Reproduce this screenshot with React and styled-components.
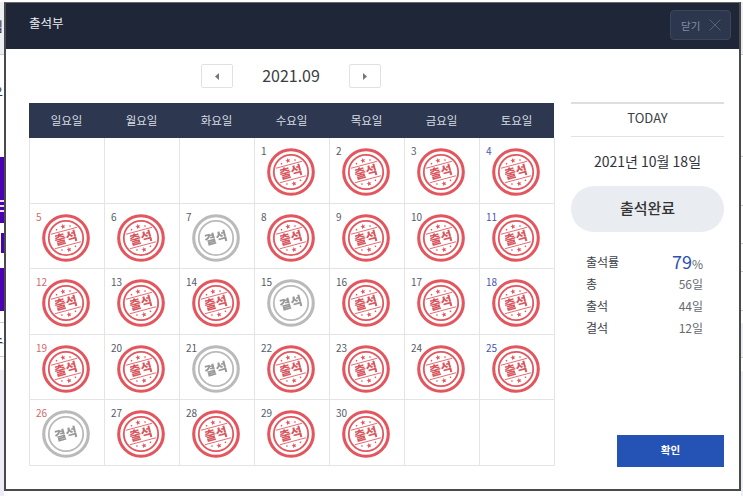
import React from "react";
import styled, { createGlobalStyle } from "styled-components";

const FONT = `"Noto Sans CJK KR", "Noto Sans", sans-serif`;

const WEEK = ["일요일", "월요일", "화요일", "수요일", "목요일", "금요일", "토요일"];
const ABSENT = [7, 15, 21, 26];
const LEAD = 3;
const TOTAL_CELLS = 35;

const STATS = [
  { label: "출석", value: "44일" },
  { label: "결석", value: "12일" },
];

const STAR = "M0-2.6l.7 1.7 1.8.1-1.4 1.2.5 1.8L0 1.2-1.6 2.2-1.1.4-2.5-.8-.7-.9z";

const Stamp = ({ absent }) => {
  const color = absent ? "#bababa" : "#e4565e";
  const ink = absent ? "#989898" : "#d8585f";
  return (
    <StampSvg viewBox="0 0 48 48">
      <circle cx="24" cy="24" r="22.3" fill="none" stroke={color} strokeWidth="3.1" />
      <circle cx="24" cy="24" r="17.2" fill="none" stroke={color} strokeWidth="1.8" />
      <g transform="rotate(-15 24 24)">
        {!absent && (
          <>
            <path d={STAR} fill={color} transform="translate(24 12.2)" />
            <path d={STAR} fill={color} transform="translate(24 36)" />
            <circle cx="17" cy="13.5" r=".8" fill={color} />
            <circle cx="31" cy="13.5" r=".8" fill={color} />
            <circle cx="17" cy="34.5" r=".8" fill={color} />
            <circle cx="31" cy="34.5" r=".8" fill={color} />
            <path d="M10.5 16.5h27M10.5 31.5h27" stroke={color} strokeWidth="0.8" />
          </>
        )}
        <StampText x="24" y="28.4" fill={ink} textAnchor="middle">
          {absent ? "결석" : "출석"}
        </StampText>
      </g>
    </StampSvg>
  );
};

const dayColor = (index) => {
  if (index % 7 === 0) return "#d5686c";
  if (index % 7 === 6) return "#4a55b5";
  return "#555b66";
};

const App = () => {
  const cells = Array.from({ length: TOTAL_CELLS }, (_, i) => {
    const day = i - LEAD + 1;
    return day >= 1 && day <= 30 ? day : null;
  });

  return (
    <>
      <GlobalStyle />
      <Page>
        <LeftStrip>
          <Band $h={2} $bg="#fff" />
          <Band $h={53} $bg="#eceef2" $line>
            <Fragment>입</Fragment>
          </Band>
          <Band $h={102} $bg="#fff">
            <Fragment $top={28}>으</Fragment>
          </Band>
          <Band $h={40} $bg="#4b00b4" />
          <Band $h={16} $bg="#4b00b4"><Stripes /></Band>
          <Band $h={10} $bg="#4b00b4" />
          <Band $h={10} $bg="#fff" />
          <Band $h={20} $bg="#fff"><Notch /></Band>
          <Band $h={15} $bg="#fff" />
          <Band $h={43} $bg="#4b00b4" />
          <Band $h={12} $bg="#fff" $line />
          <Band $h={21} $bg="#fff" $line>
            <Fragment $top={7}>스</Fragment>
          </Band>
          <Band $h={13} $bg="#fff" $line />
          <Band $h={13} $bg="#fff" />
          <Band $h={126} $bg="#eceef3" />
        </LeftStrip>

        <Modal>
          <Header>
            <Title>출석부</Title>
            <CloseButton>
              닫기
              <svg width="12" height="12" viewBox="0 0 12 12">
                <path d="M.5.5l11 11M11.5.5l-11 11" stroke="#56627a" strokeWidth="1" fill="none" />
              </svg>
            </CloseButton>
          </Header>

          <Body>
            <Main>
              <Pager>
                <PageButton>
                  <svg width="4" height="7" viewBox="0 0 4 7">
                    <path d="M4 0v7L0 3.5z" fill="#777" />
                  </svg>
                </PageButton>
                <Month>2021.09</Month>
                <PageButton>
                  <svg width="4" height="7" viewBox="0 0 4 7">
                    <path d="M0 0v7L4 3.5z" fill="#777" />
                  </svg>
                </PageButton>
              </Pager>

              <WeekRow>
                {WEEK.map((name) => (
                  <WeekName key={name}>{name}</WeekName>
                ))}
              </WeekRow>
              <DayGrid>
                {cells.map((day, i) => (
                  <DayCell key={i}>
                    {day && <DayNum $color={dayColor(i)}>{day}</DayNum>}
                    {day && <Stamp absent={ABSENT.includes(day)} />}
                  </DayCell>
                ))}
              </DayGrid>
            </Main>

            <Side>
              <TodayLabel>TODAY</TodayLabel>
              <TodayDate>2021년 10월 18일</TodayDate>
              <StatusPill>출석완료</StatusPill>
              <Stats>
                <StatRow>
                  <span>출석률</span>
                  <Rate>
                    <b>79</b>%
                  </Rate>
                </StatRow>
                <StatRow>
                  <span>총</span>
                  <StatValue>56일</StatValue>
                </StatRow>
                {STATS.map((s) => (
                  <StatRow key={s.label}>
                    <span>{s.label}</span>
                    <StatValue>{s.value}</StatValue>
                  </StatRow>
                ))}
              </Stats>
              <ConfirmButton>확인</ConfirmButton>
            </Side>
          </Body>
        </Modal>

        <RightStrip>
          <Band $h={2} $bg="#fff" />
          <Band $h={53} $bg="#eceef2" $line />
          <Band $h={102} $bg="#fff" $line />
          <Band $h={49} $bg="#fff" $line />
          <Band $h={38} $bg="#fff" $line />
          <Band $h={28} $bg="#fff" $line />
          <Band $h={39} $bg="#fff" $line />
          <Band $h={12} $bg="#fff" />
          <Band $h={35} $bg="#eceef3" $line />
          <Band $h={13} $bg="#fff" />
          <Band $h={125} $bg="#eceef3" />
        </RightStrip>
      </Page>
    </>
  );
};

const GlobalStyle = createGlobalStyle`
  html, body {
    margin: 0;
    padding: 0;
    background: #fff;
    overflow: hidden;
  }
  * {
    box-sizing: border-box;
  }
`;

const Page = styled.div`
  width: 743px;
  height: 496px;
  display: flex;
  font-family: ${FONT};
  overflow: hidden;
`;

const LeftStrip = styled.div`
  width: 4px;
  flex: none;
  display: flex;
  flex-direction: column;
  overflow: hidden;
`;

const RightStrip = styled(LeftStrip)`
  width: 2px;
`;

const Band = styled.div`
  flex: none;
  height: ${(p) => p.$h}px;
  background: ${(p) => p.$bg};
  border-bottom: ${(p) => (p.$line ? "1px solid #c9ccd2" : "none")};
  overflow: hidden;
`;

const Fragment = styled.div`
  margin: ${(p) => p.$top || 16}px 0 0 -9px;
  font-size: 13px;
  line-height: 16px;
  color: #333;
`;

const Stripes = styled.div`
  height: 100%;
  background: repeating-linear-gradient(#4b00b4 0 3px, #e6dcf5 3px 5px);
`;

const Notch = styled.div`
  height: 100%;
  margin-left: 1px;
  background: #4b00b4;
`;

const Modal = styled.div`
  width: 737px;
  height: 489px;
  margin-top: 2px;
  flex: none;
  display: flex;
  flex-direction: column;
  background: #fff;
  border: 2px solid #4a4a4a;
  border-top: 1px solid #6a6a6a;
`;

const Header = styled.div`
  height: 46px;
  flex: none;
  display: flex;
  align-items: center;
  justify-content: space-between;
  padding: 0 8px 0 23px;
  background: #1f2638;
`;

const Title = styled.div`
  color: #eceef2;
  font-size: 12.5px;
  padding-bottom: 7px;
`;

const CloseButton = styled.div`
  width: 61px;
  height: 30px;
  margin-top: -2px;
  display: flex;
  align-items: center;
  gap: 9px;
  padding-left: 10px;
  background: #2c374d;
  border: 1px solid #3b465e;
  border-radius: 4px;
  color: #808da5;
  font-size: 10.5px;
`;

const Body = styled.div`
  display: flex;
  gap: 17px;
  padding: 0 15px 0 23px;
`;

const Main = styled.div`
  width: 525px;
  flex: none;
`;

const Pager = styled.div`
  height: 24px;
  margin: 15px 0;
  padding-left: 172px;
  display: flex;
  align-items: center;
`;

const PageButton = styled.div`
  width: 32px;
  height: 24px;
  display: flex;
  align-items: center;
  justify-content: center;
  background: #fff;
  border: 1px solid #dfe1e4;
  border-radius: 2px;
`;

const Month = styled.div`
  width: 116px;
  padding-bottom: 3px;
  text-align: center;
  font-size: 16px;
  color: #3a3d44;
`;

const WeekRow = styled.div`
  height: 35px;
  display: grid;
  grid-template-columns: repeat(7, 75px);
  background: #2d3850;
`;

const WeekName = styled.div`
  display: flex;
  align-items: center;
  justify-content: center;
  padding-bottom: 2px;
  color: #d9dde5;
  font-size: 11.5px;
`;

const DayGrid = styled.div`
  display: grid;
  grid-template-columns: repeat(7, 75px);
  grid-auto-rows: 65.6px;
  border-left: 1px solid #e4e4e6;
`;

const DayCell = styled.div`
  position: relative;
  display: flex;
  justify-content: center;
  padding: 10px 1px 0 0;
  border-right: 1px solid #e4e4e6;
  border-bottom: 1px solid #e4e4e6;
  margin-left: -1px;
`;

const DayNum = styled.span`
  position: absolute;
  left: 7px;
  top: 6px;
  font-size: 10px;
  line-height: 14px;
  color: ${(p) => p.$color};
`;

const StampSvg = styled.svg`
  width: 48px;
  height: 48px;
  flex: none;
  filter: blur(0.3px);
`;

const StampText = styled.text`
  font-family: ${FONT};
  font-size: 12.5px;
  font-weight: 900;
`;

const Side = styled.div`
  width: 153px;
  flex: none;
  margin-top: 53px;
  height: 365px;
  display: flex;
  flex-direction: column;
  border-top: 2px solid #dedede;
`;

const TodayLabel = styled.div`
  height: 33px;
  display: flex;
  align-items: center;
  justify-content: center;
  padding-bottom: 5px;
  border-bottom: 1px solid #e2e2e2;
  font-size: 13px;
  color: #3b3f47;
`;

const TodayDate = styled.div`
  margin-top: 13px;
  height: 22px;
  line-height: 22px;
  text-align: center;
  font-size: 14px;
  color: #2f323a;
`;

const StatusPill = styled.div`
  height: 46px;
  margin-top: 14px;
  display: flex;
  align-items: center;
  justify-content: center;
  padding-bottom: 3px;
  background: #e9ecf1;
  border-radius: 23px;
  font-size: 15px;
  font-weight: 500;
  color: #333;
`;

const Stats = styled.div`
  margin-top: 18px;
  padding: 0 21px 0 15px;
`;

const StatRow = styled.div`
  height: 22px;
  display: flex;
  align-items: center;
  justify-content: space-between;
  font-size: 12px;
  color: #3e4149;
`;

const StatValue = styled.span`
  color: #666a72;
`;

const Rate = styled.span`
  color: #666a72;
  font-size: 12px;
  b {
    font-size: 18px;
    font-weight: 400;
    color: #2b52b3;
  }
`;

const ConfirmButton = styled.div`
  width: 107px;
  height: 32px;
  margin: auto 0 0 auto;
  display: flex;
  align-items: center;
  justify-content: center;
  padding-bottom: 3px;
  background: #2552b5;
  color: #fff;
  font-size: 10.5px;
  font-weight: 700;
`;

export default App;
